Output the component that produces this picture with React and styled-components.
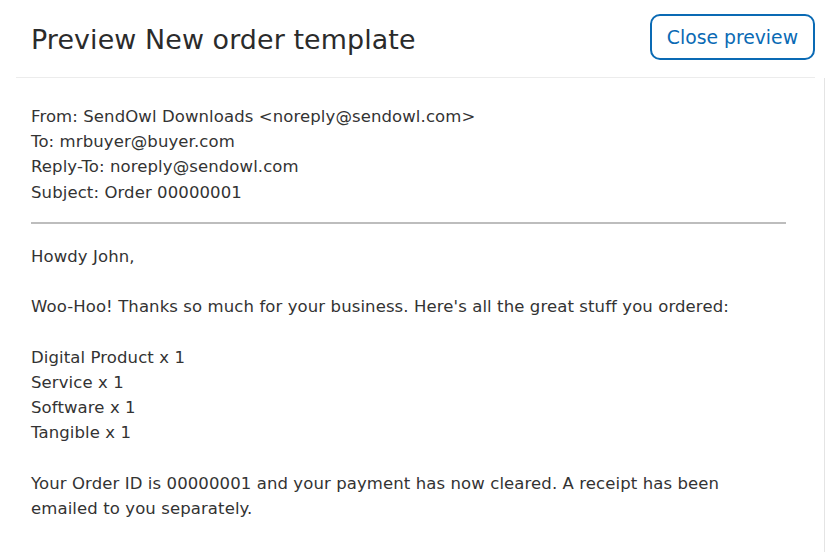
import React from "react";
import styled, {createGlobalStyle} from "styled-components";

const GlobalStyle = createGlobalStyle`
    html, body {
        margin: 0;
        padding: 0;
        background: #fff;
    }
    body {
        font-family: "DejaVu Sans", "Liberation Sans", sans-serif;
        color: #333;
    }
`;

const Page = styled.div`
    width: 827px;
    height: 552px;
    overflow: hidden;
    display: flex;
    flex-direction: column;
`;

const Header = styled.header`
    display: flex;
    align-items: center;
    justify-content: space-between;
    margin: 0 12px 0 16px;
    padding: 14px 0 17px 15px;
    border-bottom: 1px solid #ececec;
`;

const Title = styled.h1`
    margin: 4px 0 0;
    font-size: 26.9px;
    font-weight: 400;
    color: #2b2b2b;
    letter-spacing: 0.1px;
`;

const CloseButton = styled.button`
    height: 46px;
    padding: 0 15px;
    border: 2px solid #0a6ab4;
    border-radius: 10px;
    background: #fff;
    color: #0a6ab4;
    font-family: inherit;
    font-size: 18.8px;
`;

const Body = styled.section`
    flex: 1;
    margin: 0 2px 0 16px;
    padding: 26px 38px 0 15px;
    border-right: 1px solid #e4e4e4;
`;

const Meta = styled.div`
    font-size: 16.5px;
    letter-spacing: 0.1px;
    line-height: 25.2px;
`;

const Rule = styled.hr`
    margin: 17px 0 20px;
    border: 0;
    border-top: 2px solid #bdbdbd;
`;

const Message = styled.div`
    font-size: 16.5px;
    letter-spacing: 0.1px;
    line-height: 25.2px;
    max-width: 740px;
`;

const Gap = styled.div`
    height: 25.2px;
`;

export default function App() {
    const items = ["Digital Product x 1", "Service x 1", "Software x 1", "Tangible x 1"];
    return (
        <Page>
            <GlobalStyle />
            <Header>
                <Title>Preview New order template</Title>
                <CloseButton>Close preview</CloseButton>
            </Header>
            <Body>
                <Meta>
                    <div>From: SendOwl Downloads &lt;noreply@sendowl.com&gt;</div>
                    <div>To: mrbuyer@buyer.com</div>
                    <div>Reply-To: noreply@sendowl.com</div>
                    <div>Subject: Order 00000001</div>
                </Meta>
                <Rule />
                <Message>
                    <div>Howdy John,</div>
                    <Gap />
                    <div>Woo-Hoo! Thanks so much for your business. Here's all the great stuff you ordered:</div>
                    <Gap />
                    {items.map((item) => (
                        <div key={item}>{item}</div>
                    ))}
                    <Gap />
                    <div>
                        Your Order ID is 00000001 and your payment has now cleared. A receipt has been
                        emailed to you separately.
                    </div>
                </Message>
            </Body>
        </Page>
    );
}
